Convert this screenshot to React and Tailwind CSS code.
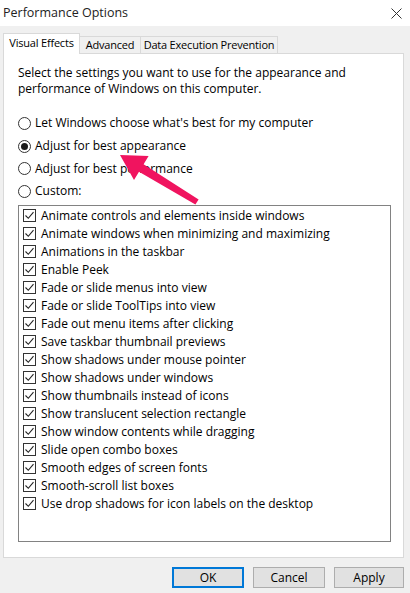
const ITEMS = [
  'Animate controls and elements inside windows',
  'Animate windows when minimizing and maximizing',
  'Animations in the taskbar',
  'Enable Peek',
  'Fade or slide menus into view',
  'Fade or slide ToolTips into view',
  'Fade out menu items after clicking',
  'Save taskbar thumbnail previews',
  'Show shadows under mouse pointer',
  'Show shadows under windows',
  'Show thumbnails instead of icons',
  'Show translucent selection rectangle',
  'Show window contents while dragging',
  'Slide open combo boxes',
  'Smooth edges of screen fonts',
  'Smooth-scroll list boxes',
  'Use drop shadows for icon labels on the desktop',
]

const RADIOS = [
  "Let Windows choose what's best for my computer",
  'Adjust for best appearance',
  'Adjust for best performance',
  'Custom:',
]

function Radio({ checked }) {
  return (
    <span className="flex h-[13px] w-[13px] shrink-0 items-center justify-center rounded-full border border-[#333] bg-white">
      {checked && <span className="h-[7px] w-[7px] rounded-full bg-[#1a1a1a]" />}
    </span>
  )
}

function Checkbox() {
  return (
    <span className="flex h-[13px] w-[13px] shrink-0 items-center justify-center border border-[#333] bg-white">
      <svg width="11" height="11" viewBox="0 0 11 11">
        <path d="M1.5 5.5 L4.3 8.3 L9.5 2.2" fill="none" stroke="#222" strokeWidth="1.1" />
      </svg>
    </span>
  )
}

export default function App() {
  return (
    <div className="relative h-[593px] w-[410px] overflow-hidden bg-[#f0f0f0] text-[12px] text-black" style={{ fontFamily: '"Segoe UI", "Open Sans", "Noto Sans", sans-serif' }}>
      <div className="flex h-[26px] items-center justify-between bg-white pl-[3px] pr-[8px]">
        <span className="text-[12.5px] text-[#222]">Performance Options</span>
        <svg width="11" height="11" viewBox="0 0 11 11">
          <path d="M0.5 0.5 L10.5 10.5 M10.5 0.5 L0.5 10.5" stroke="#333" strokeWidth="1" />
        </svg>
      </div>

      <div className="flex h-[27px] items-end whitespace-nowrap pl-[3px] text-[11px] tracking-[-0.2px]">
        <div className="relative z-10 -mb-px flex h-[21px] w-[77px] shrink-0 items-center justify-center border border-b-0 border-[#d9d9d9] bg-white pb-[2px]">
          Visual Effects
        </div>
        <div className="flex h-[17px] w-[61px] shrink-0 items-center justify-center border border-l-0 border-b-0 border-[#d9d9d9] bg-[#f0f0f0]">
          Advanced
        </div>
        <div className="flex h-[17px] w-[137px] shrink-0 items-center justify-center border border-l-0 border-b-0 border-[#d9d9d9] bg-[#f0f0f0]">
          Data Execution Prevention
        </div>
      </div>

      <div className="ml-[3px] flex h-[505px] w-[401px] flex-col border border-[#d9d9d9] bg-white pl-[14px]">
        <p className="mt-[11px] leading-[16px]">
          Select the settings you want to use for the appearance and
          <br />
          performance of Windows on this computer.
        </p>
        <div className="mt-[15px] flex flex-col">
          {RADIOS.map((r, i) => (
            <div key={r} className="flex h-[22.7px] items-center gap-[4px]">
              <Radio checked={i === 1} />
              <span>{r}</span>
            </div>
          ))}
        </div>
        <div className="mt-[2px] h-[337px] w-[373px] border border-[#828282] pl-[4px] pt-[1px]">
          {ITEMS.map((t) => (
            <div key={t} className="flex h-[18px] items-center gap-[5px]">
              <Checkbox />
              <span>{t}</span>
            </div>
          ))}
        </div>
      </div>

      <div className="mt-[9px] flex justify-end gap-[9px] pr-[6px]">
        <button className="h-[21px] w-[72px] border-2 border-[#0078d7] bg-[#e1e1e1]">OK</button>
        <button className="h-[21px] w-[72px] border border-[#adadad] bg-[#e1e1e1]">Cancel</button>
        <button className="h-[21px] w-[70px] border border-[#adadad] bg-[#e1e1e1]">Apply</button>
      </div>

      <svg className="absolute left-0 top-0" width="410" height="593" viewBox="0 0 410 593" style={{ pointerEvents: 'none' }}>
        <polygon points="120,155 148.6,156 143.6,164.2 198.6,199.4 195.4,204.6 139,171.8 134,180" fill="#f0145f" />
      </svg>
    </div>
  )
}
